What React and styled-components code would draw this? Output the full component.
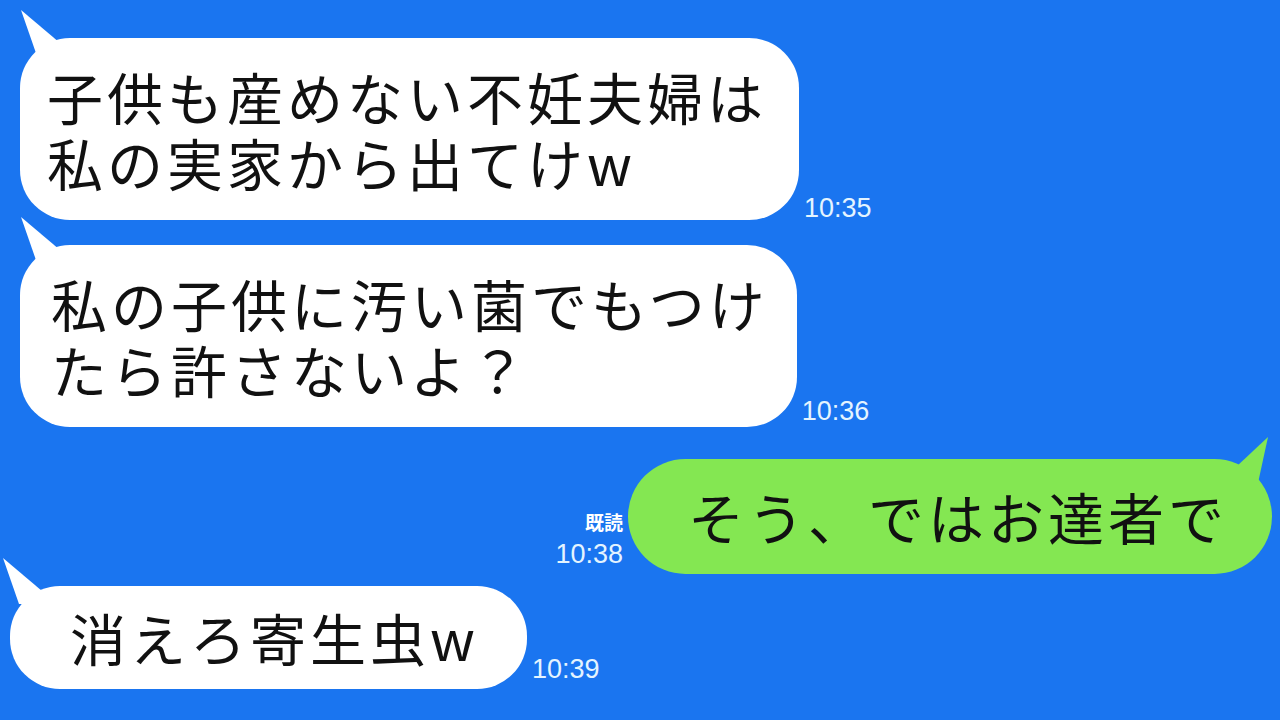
import styled, { createGlobalStyle } from 'styled-components'

const GlobalStyle = createGlobalStyle`
    html, body {
        margin: 0;
        padding: 0;
        background: #1a75f0;
    }
`

const Screen = styled.div`
    width: 1280px;
    height: 720px;
    overflow: hidden;
    background: #1a75f0;
    display: flex;
    flex-direction: column;
    font-family: "Noto Sans CJK JP", "Noto Sans", sans-serif;
`

const Row = styled.div`
    display: flex;
    align-items: flex-end;
    justify-content: ${props => props.$mine ? 'flex-end' : 'flex-start'};
    margin-top: ${props => props.$top}px;
    padding-left: ${props => props.$left || 0}px;
    padding-right: ${props => props.$right || 0}px;
    gap: 5px;
`

const Bubble = styled.div`
    position: relative;
    background: ${props => props.$mine ? '#84e752' : '#ffffff'};
    color: #111111;
    font-size: 56px;
    letter-spacing: 4px;
    line-height: 66px;
    border-radius: ${props => props.$radius || 50}px;
    padding: ${props => props.$pad};
    white-space: nowrap;

    &::before {
        content: "";
        position: absolute;
        background: inherit;
        width: 42px;
        height: 50px;
        ${props => props.$mine ? `
            top: -24px;
            right: -2px;
            clip-path: polygon(36px 2px, 26px 48px, 4px 48px, 4px 32px);
        ` : `
            top: -28px;
            left: ${props.$tailX || 0}px;
            clip-path: polygon(1px 0, 40px 33px, 40px 46px, 17px 46px);
        `}
    }
`

const Meta = styled.div`
    display: flex;
    flex-direction: column;
    align-items: ${props => props.$mine ? 'flex-end' : 'flex-start'};
    margin-bottom: ${props => props.$bottom || 0}px;
    color: #e4f4ff;
`

const Read = styled.span`
    font-size: 19px;
    font-weight: 700;
    line-height: 24px;
    color: #ffffff;
    margin-bottom: 6px;
`

const Time = styled.span`
    font-family: "Liberation Sans", "Noto Sans", sans-serif;
    font-size: 27px;
    line-height: 28px;
`

const Line = styled.div``

const App = () => {
    return (
        <Screen>
            <GlobalStyle />
            <Row $top={38} $left={20}>
                <Bubble $pad="25px 32px 25px 27px">
                    <Line>子供も産めない不妊夫婦は</Line>
                    <Line>私の実家から出てけw</Line>
                </Bubble>
                <Meta $bottom={-2}>
                    <Time>10:35</Time>
                </Meta>
            </Row>
            <Row $top={25} $left={20}>
                <Bubble $pad="25px 28px 25px 31px">
                    <Line>私の子供に汚い菌でもつけ</Line>
                    <Line>たら許さないよ？</Line>
                </Bubble>
                <Meta $bottom={2}>
                    <Time>10:36</Time>
                </Meta>
            </Row>
            <Row $top={32} $right={8} $mine>
                <Meta $mine $bottom={6}>
                    <Read>既読</Read>
                    <Time>10:38</Time>
                </Meta>
                <Bubble $mine $radius={58} $pad="24px 44px 25px 60px">
                    そう、ではお達者で
                </Bubble>
            </Row>
            <Row $top={12} $left={10}>
                <Bubble $tailX={-8} $pad="18px 48px 19px 60px">
                    消えろ寄生虫w
                </Bubble>
                <Meta $bottom={6}>
                    <Time>10:39</Time>
                </Meta>
            </Row>
        </Screen>
    )
}

export default App
